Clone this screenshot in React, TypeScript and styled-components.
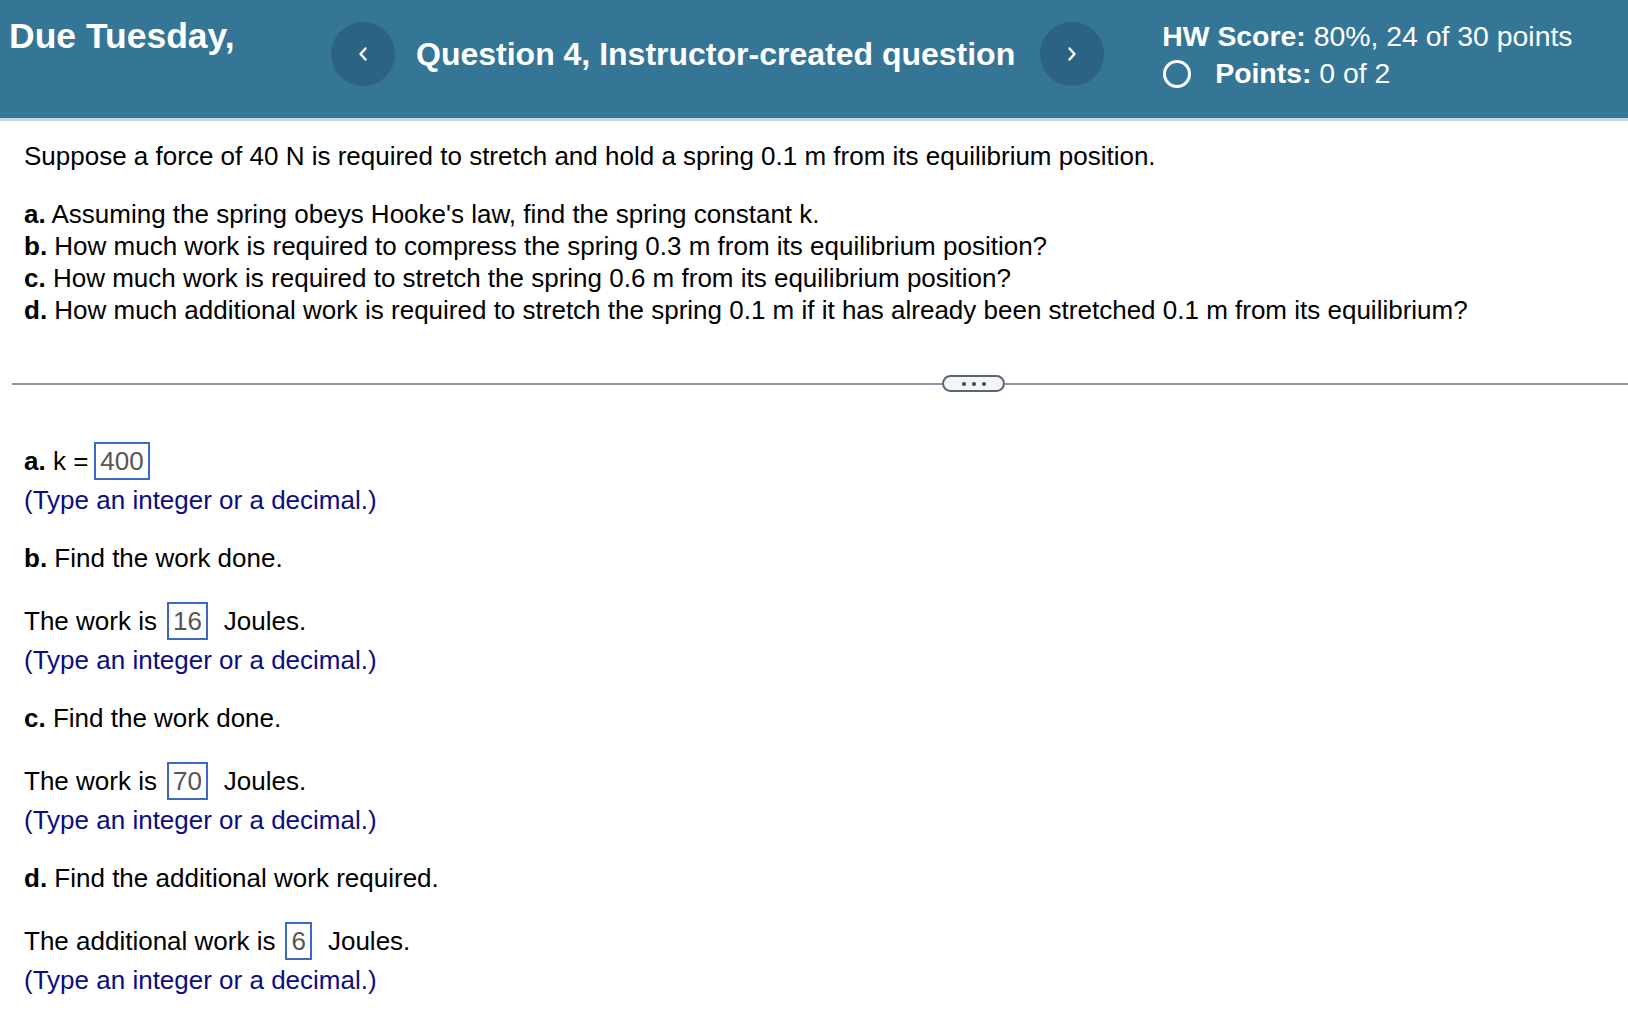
import * as React from 'react';
import styled, {createGlobalStyle} from 'styled-components';

const GlobalStyle = createGlobalStyle`
  html, body {
    margin: 0;
    padding: 0;
    background: #ffffff;
    font-family: "Liberation Sans", Arial, Helvetica, sans-serif;
    color: #000;
  }
`;

const Header = styled.header`
  height: 118px;
  background: #357697;
  border-bottom: 3px solid #c3d8e4;
  display: flex;
  align-items: flex-start;
  color: #fff;
`;

const DueTitle = styled.div`
  width: 322px;
  padding: 16px 0 0 9px;
  font-size: 35.5px;
  line-height: 40px;
  font-weight: bold;
`;

const NavButton = styled.button`
  flex: none;
  width: 64px;
  height: 64px;
  margin-top: 22px;
  border: none;
  border-radius: 50%;
  background: #2d6382;
  display: flex;
  align-items: center;
  justify-content: center;
  padding: 0;
  cursor: pointer;
`;

const QuestionTitle = styled.h1`
  margin: 0 25px 0 21px;
  padding-top: 34px;
  font-size: 32px;
  line-height: 40px;
  font-weight: bold;
  white-space: nowrap;
`;

const Score = styled.div`
  margin-left: 58px;
  padding-top: 18px;
  font-size: 28.4px;
  line-height: 37px;
  white-space: nowrap;
`;

const ScoreLine = styled.div`
  display: flex;
  align-items: center;
`;

const Ring = styled.span`
  width: 22px;
  height: 22px;
  border: 3px solid #fff;
  border-radius: 50%;
  margin: 0 24px 0 1px;
`;

const Content = styled.main`
  padding: 19px 24px 0 24px;
  font-size: 26px;
  line-height: 32px;
`;

const Paragraph = styled.p`
  margin: 0 0 26px 0;
`;

const Divider = styled.div`
  display: flex;
  align-items: center;
  margin: 49px -24px 0 -12px;
`;

const Rule = styled.div<{ $width?: number }>`
  height: 2px;
  background: #8c96a1;
  ${(props) => (props.$width ? `width: ${props.$width}px; flex: none;` : 'flex: 1;')}
`;

const Pill = styled.div`
  width: 63px;
  height: 17px;
  box-sizing: border-box;
  border: 2px solid #5b6570;
  border-radius: 9px;
  background: #f3f4f6;
  display: flex;
  align-items: center;
  justify-content: center;
  gap: 6px;
`;

const Dot = styled.span`
  width: 4px;
  height: 4px;
  border-radius: 50%;
  background: #3c4550;
`;

const Answers = styled.section`
  padding-top: 50px;
`;

const AnswerRow = styled.div`
  display: flex;
  align-items: center;
  height: 38px;
`;

const Box = styled.span<{ $before: number }>`
  height: 38px;
  box-sizing: border-box;
  border: 2px solid #3d69c6;
  padding: 0 4px;
  margin: 0 16px 0 ${(props) => props.$before}px;
  color: #555;
  display: inline-flex;
  align-items: center;
`;

const Hint = styled.div`
  margin-top: 4px;
  color: #0c0c82;
`;

const Prompt = styled.div`
  margin: 26px 0 28px 0;
`;

const Chevron = ({dir}: { dir: 'left' | 'right' }) => (
  <svg width="10" height="16" viewBox="0 0 10 16">
    <path
      d={dir === 'left' ? 'M7.5 2.5 L2.5 8 L7.5 13.5' : 'M2.5 2.5 L7.5 8 L2.5 13.5'}
      fill="none"
      stroke="#fff"
      strokeWidth="2.4"
      strokeLinecap="round"
      strokeLinejoin="round"
    />
  </svg>
);

const WorkAnswer = ({label, value}: { label: string; value: string }) => (
  <>
    <AnswerRow>
      {label}
      <Box $before={10}>{value}</Box>
      Joules.
    </AnswerRow>
    <Hint>(Type an integer or a decimal.)</Hint>
  </>
);

const App = () => (
  <>
    <GlobalStyle/>
    <Header>
      <DueTitle>Due Tuesday,</DueTitle>
      <NavButton aria-label="Previous question"><Chevron dir="left"/></NavButton>
      <QuestionTitle>Question 4, Instructor-created question</QuestionTitle>
      <NavButton aria-label="Next question"><Chevron dir="right"/></NavButton>
      <Score>
        <ScoreLine><b>HW Score:</b>&nbsp;80%, 24 of 30 points</ScoreLine>
        <ScoreLine><Ring/><b>Points:</b>&nbsp;0 of 2</ScoreLine>
      </Score>
    </Header>
    <Content>
      <Paragraph>
        Suppose a force of 40 N is required to stretch and hold a spring 0.1 m from its equilibrium position.
      </Paragraph>
      <div>
        <div><b>a.</b> Assuming the spring obeys Hooke's law, find the spring constant k.</div>
        <div><b>b.</b> How much work is required to compress the spring 0.3 m from its equilibrium position?</div>
        <div><b>c.</b> How much work is required to stretch the spring 0.6 m from its equilibrium position?</div>
        <div><b>d.</b> How much additional work is required to stretch the spring 0.1 m if it has already been stretched 0.1 m from its equilibrium?</div>
      </div>
      <Divider>
        <Rule $width={930}/>
        <Pill><Dot/><Dot/><Dot/></Pill>
        <Rule/>
      </Divider>
      <Answers>
        <AnswerRow>
          <b>a.</b>&nbsp;k =
          <Box $before={6}>400</Box>
        </AnswerRow>
        <Hint>(Type an integer or a decimal.)</Hint>

        <Prompt><b>b.</b> Find the work done.</Prompt>
        <WorkAnswer label="The work is" value="16"/>

        <Prompt><b>c.</b> Find the work done.</Prompt>
        <WorkAnswer label="The work is" value="70"/>

        <Prompt><b>d.</b> Find the additional work required.</Prompt>
        <WorkAnswer label="The additional work is" value="6"/>
      </Answers>
    </Content>
  </>
);

export default App;
